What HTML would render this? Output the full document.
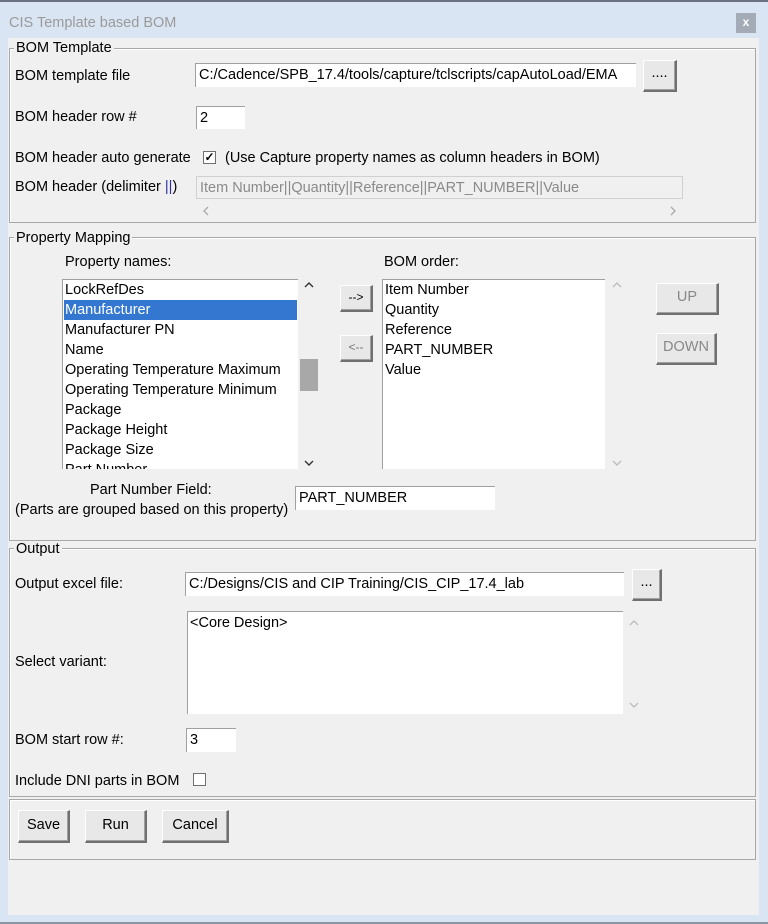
<!DOCTYPE html>
<html><head><meta charset="utf-8"><style>
*{margin:0;padding:0;box-sizing:border-box}
body{width:768px;height:924px;background:#dae5f3;position:relative;overflow:hidden;font-family:"Liberation Sans",sans-serif;font-size:14.5px;color:#000}
.a{position:absolute;white-space:nowrap}
#top{left:0;top:0;width:768px;height:2px;background:#6b7480}
#content{left:8px;top:38px;width:751px;height:877px;background:#f0f0f0}
#bot{left:0;top:922px;width:768px;height:2px;background:#8a96a4}
.grp{position:absolute;border:1px solid #a8a8a8;box-shadow:inset 1px 1px 0 #fff}
.gl{position:absolute;background:#f0f0f0;padding:0 2px;line-height:16px}
.inp{position:absolute;background:#fff;border-top:1px solid #a0a0a0;border-left:1px solid #a0a0a0;line-height:22px;padding-left:3px;overflow:hidden}
.btn{position:absolute;background:#e8e8e8;border:1px solid #fff;border-right:2px solid #707070;border-bottom:2px solid #707070;text-align:center;box-shadow:inset -1px -1px 0 #a0a0a0}
.lst{position:absolute;background:#fff;border-top:1px solid #a0a0a0;border-left:1px solid #a0a0a0}
.it{position:absolute;left:1px;line-height:20px;height:20px;padding-left:1px;white-space:nowrap}
svg.ch{position:absolute;width:10px;height:7px}
.cb{position:absolute;width:13px;height:13px;background:#fff;border:1px solid #707070}
</style></head><body>
<div class="a" id="top"></div>
<div class="a" id="content"></div>
<div class="a" id="bot"></div>
<div class="a" style="left:9px;top:15px;color:#9a9a9a;font-size:14.5px">CIS Template based BOM</div>
<div class="a" style="left:736px;top:13px;width:20px;height:20px;background:#a3acb6;color:#fff;font-weight:bold;font-size:12px;text-align:center;line-height:19px">x</div>

<div class="grp" style="left:9px;top:48px;width:747px;height:175px"></div>
<div class="gl" style="left:14px;top:40px">BOM Template</div>
<div class="a" style="left:15px;top:68px">BOM template file</div>
<div class="inp" style="left:195px;top:63px;width:441px;height:24px">C:/Cadence/SPB_17.4/tools/capture/tclscripts/capAutoLoad/EMA</div>
<div class="btn" style="left:643px;top:60px;width:34px;height:32px;line-height:24px">....</div>
<div class="a" style="left:15px;top:109px">BOM header row #</div>
<div class="inp" style="left:196px;top:106px;width:49px;height:23px">2</div>
<div class="a" style="left:15px;top:150px">BOM header auto generate</div>
<div class="cb" style="left:203px;top:151px;font-size:12px;line-height:11px;text-align:center;font-weight:bold">✓</div>
<div class="a" style="left:225px;top:150px">(Use Capture property names as column headers in BOM)</div>
<div class="a" style="left:15px;top:179px">BOM header (delimiter <span style="color:#3030a0">||</span>)</div>
<div class="inp" style="left:196px;top:176px;width:487px;height:23px;background:#f0f0f0;border:1px solid #d0d0d0;color:#8a8a8a">Item Number||Quantity||Reference||PART_NUMBER||Value</div>
<svg class="ch" style="left:202px;top:206px;width:7px;height:10px" viewBox="0 0 7 10"><path d="M6 1 L2 5 L6 9" fill="none" stroke="#aaa" stroke-width="1.3"/></svg>
<svg class="ch" style="left:670px;top:206px;width:7px;height:10px" viewBox="0 0 7 10"><path d="M1 1 L5 5 L1 9" fill="none" stroke="#aaa" stroke-width="1.3"/></svg>

<div class="grp" style="left:9px;top:237px;width:747px;height:304px"></div>
<div class="gl" style="left:14px;top:230px">Property Mapping</div>
<div class="a" style="left:65px;top:254px">Property names:</div>
<div class="lst" style="left:62px;top:279px;width:236px;height:190px;overflow:hidden">
<div class="it" style="top:0">LockRefDes</div>
<div class="it" style="top:20px;width:233px;background:#3377d0;color:#fff">Manufacturer</div>
<div class="it" style="top:40px">Manufacturer PN</div>
<div class="it" style="top:60px">Name</div>
<div class="it" style="top:80px">Operating Temperature Maximum</div>
<div class="it" style="top:100px">Operating Temperature Minimum</div>
<div class="it" style="top:120px">Package</div>
<div class="it" style="top:140px">Package Height</div>
<div class="it" style="top:160px">Package Size</div>
<div class="it" style="top:180px">Part Number</div>
</div>
<div class="a" style="left:298px;top:279px;width:21px;height:190px;background:#f0f0f0"></div>
<svg class="ch" style="left:304px;top:281px" viewBox="0 0 10 7"><path d="M1 6 L5 2 L9 6" fill="none" stroke="#333" stroke-width="1.4"/></svg>
<div class="a" style="left:300px;top:359px;width:18px;height:32px;background:#a8a8a8"></div>
<svg class="ch" style="left:304px;top:460px" viewBox="0 0 10 7"><path d="M1 1 L5 5 L9 1" fill="none" stroke="#333" stroke-width="1.4"/></svg>
<div class="btn" style="left:340px;top:285px;width:33px;height:27px;line-height:22px;font-size:12px">--&gt;</div>
<div class="btn" style="left:340px;top:335px;width:33px;height:27px;line-height:22px;font-size:12px;color:#777">&lt;--</div>
<div class="a" style="left:384px;top:254px">BOM order:</div>
<div class="lst" style="left:382px;top:279px;width:223px;height:190px">
<div class="it" style="top:0">Item Number</div>
<div class="it" style="top:20px">Quantity</div>
<div class="it" style="top:40px">Reference</div>
<div class="it" style="top:60px">PART_NUMBER</div>
<div class="it" style="top:80px">Value</div>
</div>
<svg class="ch" style="left:612px;top:281px" viewBox="0 0 10 7"><path d="M1 6 L5 2 L9 6" fill="none" stroke="#bbb" stroke-width="1.3"/></svg>
<svg class="ch" style="left:612px;top:460px" viewBox="0 0 10 7"><path d="M1 1 L5 5 L9 1" fill="none" stroke="#bbb" stroke-width="1.3"/></svg>
<div class="btn" style="left:656px;top:283px;width:63px;height:32px;line-height:27px;color:#888">UP</div>
<div class="btn" style="left:656px;top:333px;width:61px;height:32px;line-height:27px;color:#888">DOWN</div>
<div class="a" style="left:90px;top:482px">Part Number Field:</div>
<div class="a" style="left:15px;top:502px">(Parts are grouped based on this property)</div>
<div class="inp" style="left:295px;top:486px;width:200px;height:24px">PART_NUMBER</div>

<div class="grp" style="left:9px;top:548px;width:747px;height:249px"></div>
<div class="gl" style="left:14px;top:541px">Output</div>
<div class="a" style="left:15px;top:576px">Output excel file:</div>
<div class="inp" style="left:185px;top:572px;width:439px;height:24px">C:/Designs/CIS and CIP Training/CIS_CIP_17.4_lab files/CIS_CIP_Us</div>
<div class="btn" style="left:632px;top:569px;width:30px;height:32px;line-height:24px">...</div>
<div class="lst" style="left:187px;top:611px;width:436px;height:103px"><div class="it" style="top:1px">&lt;Core Design&gt;</div></div>
<svg class="ch" style="left:629px;top:619px" viewBox="0 0 10 7"><path d="M1 6 L5 2 L9 6" fill="none" stroke="#bbb" stroke-width="1.3"/></svg>
<svg class="ch" style="left:629px;top:702px" viewBox="0 0 10 7"><path d="M1 1 L5 5 L9 1" fill="none" stroke="#bbb" stroke-width="1.3"/></svg>
<div class="a" style="left:15px;top:654px">Select variant:</div>
<div class="a" style="left:15px;top:732px">BOM start row #:</div>
<div class="inp" style="left:186px;top:728px;width:50px;height:24px">3</div>
<div class="a" style="left:15px;top:773px">Include DNI parts in BOM</div>
<div class="cb" style="left:193px;top:773px"></div>

<div class="grp" style="left:9px;top:799px;width:747px;height:61px"></div>
<div class="btn" style="left:18px;top:810px;width:52px;height:33px;line-height:28px">Save</div>
<div class="btn" style="left:85px;top:810px;width:62px;height:33px;line-height:28px">Run</div>
<div class="btn" style="left:162px;top:810px;width:67px;height:33px;line-height:28px">Cancel</div>
</body></html>
